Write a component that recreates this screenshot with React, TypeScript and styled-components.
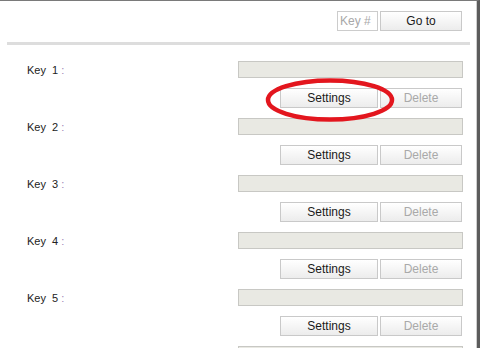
import React from "react";
import styled, { createGlobalStyle } from "styled-components";

const Global = createGlobalStyle`
  html, body {
    margin: 0;
    padding: 0;
    background: #ffffff;
  }
  body {
    font-family: "Liberation Sans", Arial, sans-serif;
  }
`;

const Frame = styled.div`
  position: relative;
  width: 480px;
  height: 348px;
  overflow: hidden;
  box-sizing: border-box;
  border-top: 1px solid #7a7a7a;
  border-right: 3px solid #5c5c5c;
  background: #ffffff;
`;

const Panel = styled.div`
  height: 100%;
  border-right: 1px solid #cfcfcf;
`;

const Toolbar = styled.div`
  display: flex;
  justify-content: flex-end;
  gap: 2px;
  height: 41px;
  box-sizing: border-box;
  padding: 10px 14px 0 0;
`;

const KeyInput = styled.input`
  width: 41px;
  height: 20px;
  box-sizing: border-box;
  border: 1px solid #cccccc;
  padding: 0 2px;
  font-family: inherit;
  font-size: 12px;
  color: #333;
  outline: none;
  &::placeholder {
    color: #a8a8a8;
  }
`;

const Button = styled.button<{ $width: number; $disabled?: boolean }>`
  width: ${({ $width }) => $width}px;
  height: 20px;
  box-sizing: border-box;
  border: 1px solid #c9c9c9;
  background: linear-gradient(#ffffff, #ececec);
  font-family: inherit;
  font-size: 12px;
  color: ${({ $disabled }) => ($disabled ? "#a9a9a9" : "#1a1a1a")};
  padding: 0;
  cursor: default;
`;

const Separator = styled.hr`
  margin: 0 6px 0 7px;
  border: 0;
  height: 3px;
  background: #dddddd;
`;

const List = styled.div`
  display: flex;
  flex-direction: column;
  gap: 10px;
  padding-top: 16px;
`;

const Entry = styled.div`
  display: flex;
  flex-direction: column;
  gap: 10px;
`;

const FieldRow = styled.div`
  display: flex;
  align-items: center;
  justify-content: space-between;
  padding: 0 13px 0 27px;
`;

const Label = styled.span`
  font-size: 11px;
  color: #222222;
  white-space: pre;
`;

const Colon = styled.span`
  color: #9a86b8;
`;

const Field = styled.div`
  width: 225px;
  height: 17px;
  box-sizing: border-box;
  border: 1px solid #c8c8c4;
  background: #e9e9e3;
`;

const Actions = styled.div`
  display: flex;
  justify-content: flex-end;
  gap: 2px;
  padding-right: 14px;
`;

const Highlight = styled.svg`
  position: absolute;
  left: 263px;
  top: 76px;
  pointer-events: none;
`;

const keys = [1, 2, 3, 4, 5];

export default function App() {
  return (
    <>
      <Global />
      <Frame>
        <Panel>
          <Toolbar>
            <KeyInput placeholder="Key #" />
            <Button $width={82}>Go to</Button>
          </Toolbar>
          <Separator />
          <List>
            {keys.map((k) => (
              <Entry key={k}>
                <FieldRow>
                  <Label>
                    Key  {k} <Colon>:</Colon>
                  </Label>
                  <Field />
                </FieldRow>
                <Actions>
                  <Button $width={98}>Settings</Button>
                  <Button $width={82} $disabled>
                    Delete
                  </Button>
                </Actions>
              </Entry>
            ))}
            {/* next entry, only its field's top edge is in view */}
            <FieldRow>
              <span />
              <Field />
            </FieldRow>
          </List>
        </Panel>
        <Highlight width="136" height="46" viewBox="0 0 136 46">
          <ellipse
            cx="67"
            cy="23"
            rx="62"
            ry="19.5"
            fill="none"
            stroke="#e3161e"
            strokeWidth="4.5"
          />
        </Highlight>
      </Frame>
    </>
  );
}
